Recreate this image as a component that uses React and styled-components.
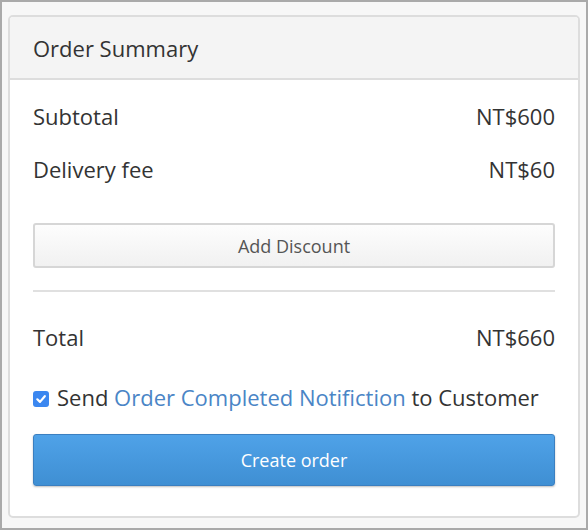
import React from "react";
import styled, { createGlobalStyle } from "styled-components";

const GlobalStyle = createGlobalStyle`
  html, body {
    margin: 0;
    padding: 0;
  }
  body {
    font-family: "Open Sans", "Noto Sans", sans-serif;
    color: #333;
  }
  * {
    box-sizing: border-box;
  }
`;

const App = () => {
  return (
    <>
      <GlobalStyle />
      <Frame>
        <Card>
          <Header>Order Summary</Header>
          <Body>
            <Row>
              <span>Subtotal</span>
              <span>NT$600</span>
            </Row>
            <Row>
              <span>Delivery fee</span>
              <span>NT$60</span>
            </Row>
            <GhostButton type="button">Add Discount</GhostButton>
            <Divider />
            <Row $total>
              <span>Total</span>
              <span>NT$660</span>
            </Row>
            <Notify>
              <Check>
                <svg width="12" height="12" viewBox="0 0 12 12">
                  <path
                    d="M2.3 6.3 L5 8.9 L9.8 3.2"
                    fill="none"
                    stroke="#fff"
                    strokeWidth="2.2"
                    strokeLinecap="round"
                    strokeLinejoin="round"
                  />
                </svg>
              </Check>
              Send <NotifyLink>Order Completed Notifiction</NotifyLink> to Customer
            </Notify>
            <PrimaryButton type="button">Create order</PrimaryButton>
          </Body>
        </Card>
      </Frame>
    </>
  );
};

const Frame = styled.div`
  width: 588px;
  height: 530px;
  border: 2px solid #aaa;
  background: #f7f7f7;
  padding: 13px 6px 10px 6px;
`;

const Card = styled.div`
  background: #fff;
  border: 2px solid #ddd;
  border-radius: 5px;
  overflow: hidden;
`;

const Header = styled.div`
  background: #f4f4f4;
  border-bottom: 2px solid #ddd;
  height: 63px;
  padding: 0 23px;
  display: flex;
  align-items: center;
  font-size: 22px;
  color: #333;
`;

const Body = styled.div`
  padding: 9px 23px 30px 23px;
  display: flex;
  flex-direction: column;
`;

const Row = styled.div`
  display: flex;
  justify-content: space-between;
  align-items: center;
  height: 53px;
  font-size: 22px;
  margin-top: ${(p) => (p.$total ? "18px" : "0")};
`;

const GhostButton = styled.button`
  margin-top: 28px;
  height: 45px;
  width: 100%;
  border: 2px solid #d6d6d6;
  border-radius: 3px;
  background: linear-gradient(#fdfdfd, #f1f1f1);
  font-family: inherit;
  font-size: 18px;
  color: #555;
`;

const Divider = styled.hr`
  border: none;
  border-top: 2px solid #e0e0e0;
  margin: 22px 0 0 0;
`;

const Notify = styled.div`
  margin-top: 19px;
  height: 30px;
  display: flex;
  align-items: center;
  font-size: 22px;
  white-space: pre;
  color: #333;
`;

const Check = styled.span`
  width: 16px;
  height: 16px;
  border-radius: 3px;
  background: #3b87f0;
  display: inline-flex;
  align-items: center;
  justify-content: center;
  margin: 3px 8px 0 0;
`;

const NotifyLink = styled.span`
  color: #4a85c6;
`;

const PrimaryButton = styled.button`
  margin-top: 22px;
  height: 52px;
  width: 100%;
  border: 1px solid #3b7fc0;
  border-radius: 3px;
  background: linear-gradient(#4fa2e8, #3f8fd3);
  box-shadow: 0 1px 2px rgba(0, 0, 0, 0.25);
  font-family: inherit;
  font-size: 18px;
  color: #fff;
`;

export default App;
